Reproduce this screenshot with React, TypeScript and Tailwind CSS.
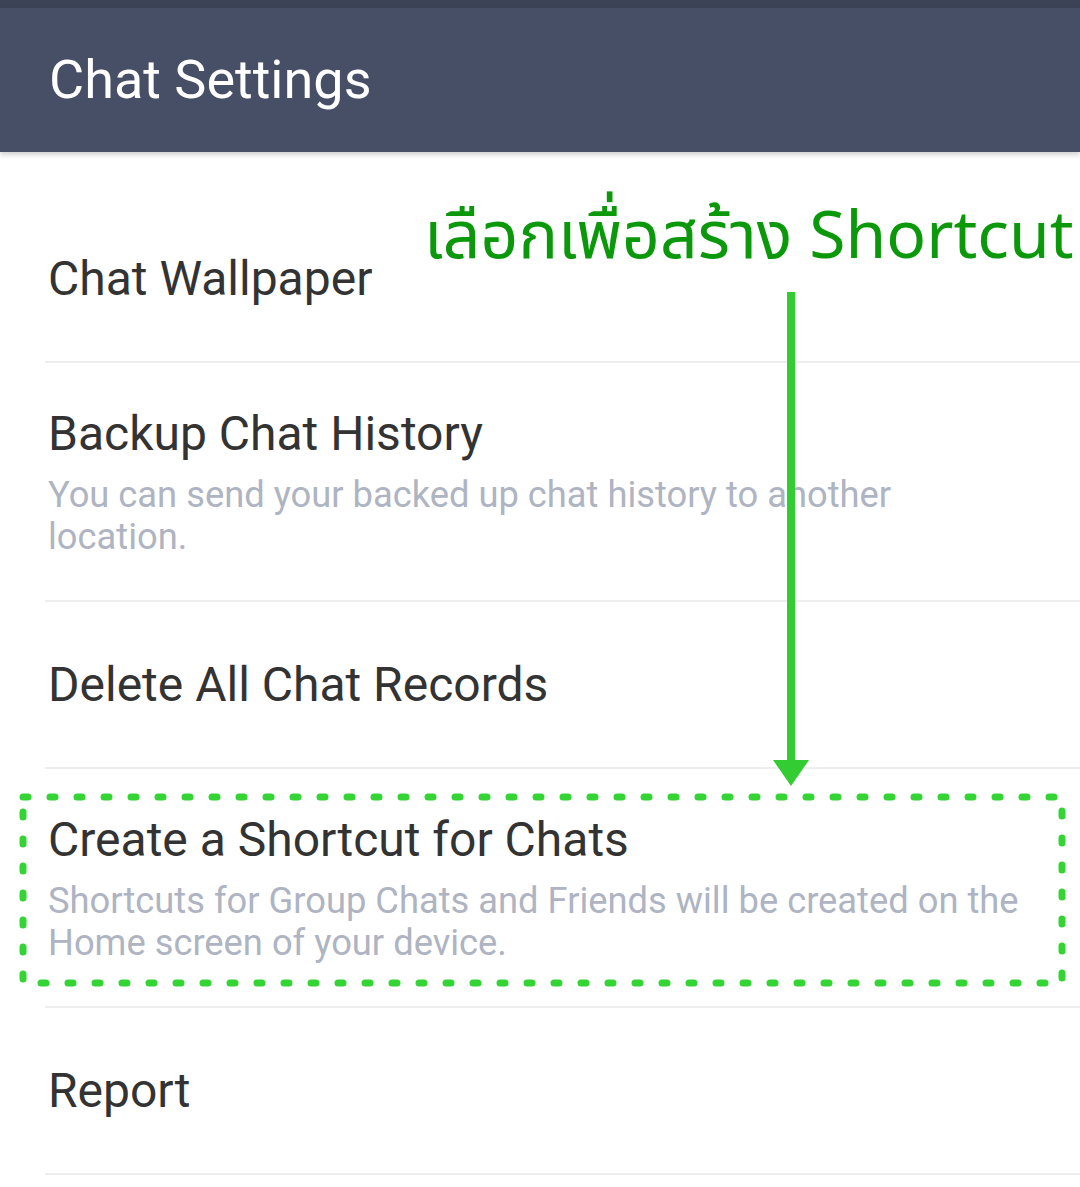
import React from 'react';

const rows = [
  { title: 'Chat Wallpaper' },
  { title: 'Backup Chat History', sub: ['You can send your backed up chat history to another', 'location.'] },
  { title: 'Delete All Chat Records' },
  {
    title: 'Create a Shortcut for Chats',
    sub: ['Shortcuts for Group Chats and Friends will be created on the', 'Home screen of your device.'],
  },
  { title: 'Report' },
];

export default function App() {
  return (
    <div className="w-[1080px] h-[1187px] bg-white overflow-hidden font-['Roboto',sans-serif]">
      <div className="h-[8px] bg-[#3d4356]" />
      <header className="relative z-10 h-[144px] bg-[#474f66] flex items-center pl-[49px] shadow-[0_3px_5px_rgba(0,0,0,0.18)]">
        <h1 className="text-[54px] text-white leading-none">Chat Settings</h1>
      </header>

      <main className="relative pt-[44px]">
        {rows.map((r) => (
          <div key={r.title} className="pl-[45px]">
            <div
              className={
                'border-b-2 border-[#eeeeee] pl-[3px] flex flex-col justify-center ' +
                (r.sub ? 'h-[239px]' : 'h-[167px]')
              }
            >
              <div className="text-[48px] leading-[56px] text-[#333333]">{r.title}</div>
              {r.sub && (
                <div className="mt-[12px] text-[36.3px] leading-[42px] text-[#aeb4c2]">
                  {r.sub.map((l) => (
                    <div key={l}>{l}</div>
                  ))}
                </div>
              )}
            </div>
          </div>
        ))}

        {/* annotation */}
        <div className="absolute left-[424px] top-[53px] text-[66px] leading-none text-[#0b990b] font-['Noto_Sans_Thai','Noto_Sans',sans-serif] whitespace-nowrap">
          เลือกเพื่อสร้าง Shortcut
        </div>
        <svg className="absolute left-[770px] top-[140px]" width="44" height="496" viewBox="0 0 44 496">
          <rect x="17" y="0" width="8" height="470" fill="#33cc33" />
          <polygon points="3,468 39,468 21,494" fill="#33cc33" />
        </svg>
        <svg className="absolute left-[18px] top-[641px]" width="1050" height="194" viewBox="0 0 1050 194">
          <rect
            x="5"
            y="4"
            width="1039"
            height="186"
            fill="none"
            stroke="#33d433"
            strokeWidth="7"
            strokeLinecap="round"
            strokeDasharray="5 22"
          />
        </svg>
      </main>
    </div>
  );
}
